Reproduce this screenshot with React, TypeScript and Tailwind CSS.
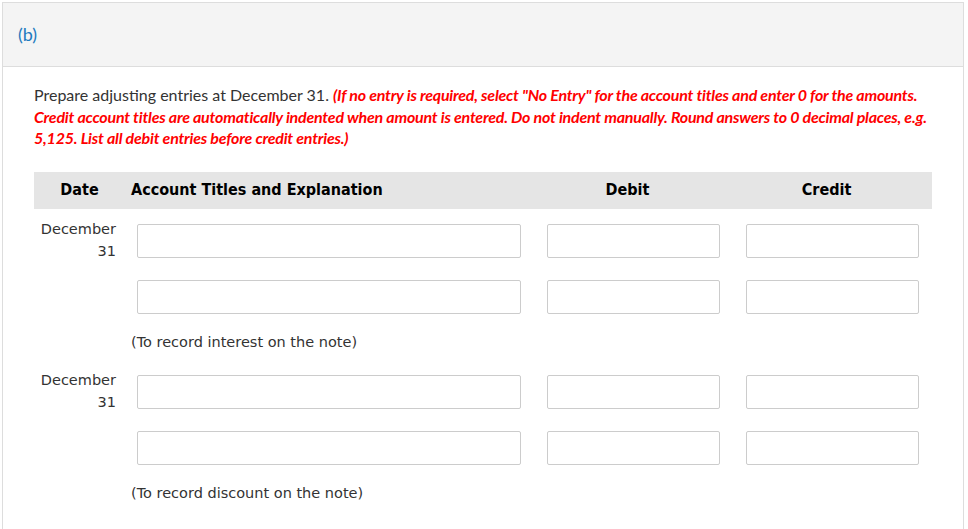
const inputCls = "block h-[34px] rounded-[2px] border border-[#cccccc] bg-white";

function EntryRow({ date }: { date?: boolean }) {
    return (
        <div className="flex items-start">
            <div className="w-[91px] pr-[9px] text-right text-[14.5px] leading-[22px] text-[#333]">
                {date ? (
                    <>
                        December
                        <br />
                        31
                    </>
                ) : null}
            </div>
            <div className="ml-[12px] mt-[6px] flex">
                <input className={inputCls + " w-[384px]"} />
                <input className={inputCls + " ml-[26px] w-[173px]"} />
                <input className={inputCls + " ml-[26px] w-[173px]"} />
            </div>
        </div>
    );
}

function EntryBlock({ note, top }: { note: string; top: string }) {
    return (
        <div className={top}>
            <EntryRow date />
            <div className="mt-[12px]">
                <EntryRow />
            </div>
            <div className="mt-[17px] pl-[97px] text-[14.5px] leading-[22px] text-[#333]">{note}</div>
        </div>
    );
}

export default function App() {
    return (
        <div className="min-h-[529px] bg-white pl-[2px] pt-[2px]" style={{ fontFamily: "'DejaVu Sans', sans-serif" }}>
            <div className="w-[962px] min-h-[527px] border border-b-0 border-[#dddddd]">
                <div className="flex h-[64px] items-center border-b border-[#dddddd] bg-[#f4f4f4] pl-[15px]">
                    <span className="text-[18px] text-[#1f7bbf]" style={{ fontFamily: "Lato, sans-serif" }}>
                        (b)
                    </span>
                </div>
                <div className="pl-[31px] pr-[30px]">
                    <p className="mt-[17px] text-[16px] leading-[21.5px] text-[#333]" style={{ fontFamily: "Lato, sans-serif" }}>
                        Prepare adjusting entries at December 31.{" "}
                        <span className="font-bold italic tracking-[-0.22px] text-[#ff0000]">
                            (If no entry is required, select "No Entry" for the account titles and enter 0 for the amounts. Credit account
                            titles are automatically indented when amount is entered. Do not indent manually. Round answers to 0 decimal
                            places, e.g. 5,125. List all debit entries before credit entries.)
                        </span>
                    </p>
                    <div className="mt-[23px] w-[898px]">
                        <div className="flex h-[37px] items-center bg-[#e5e5e5] text-[16px] font-bold text-black" style={{ fontFamily: "'DejaVu Sans Condensed', 'DejaVu Sans', sans-serif" }}>
                            <div className="w-[91px] text-center">Date</div>
                            <div className="ml-[6px] w-[390px]">Account Titles and Explanation</div>
                            <div className="ml-[20px] w-[173px] text-center">Debit</div>
                            <div className="ml-[26px] w-[173px] text-center">Credit</div>
                        </div>
                        <EntryBlock top="mt-[9px]" note="(To record interest on the note)" />
                        <EntryBlock top="mt-[16px]" note="(To record discount on the note)" />
                    </div>
                </div>
            </div>
        </div>
    );
}
